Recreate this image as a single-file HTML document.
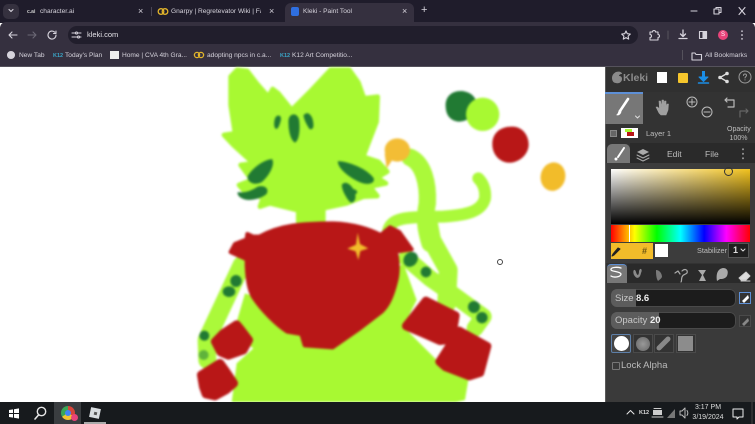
<!DOCTYPE html>
<html><head><meta charset="utf-8">
<style>
html,body{margin:0;padding:0;width:755px;height:424px;overflow:hidden;background:#fff;font-family:"Liberation Sans",sans-serif}
.a{position:absolute;white-space:nowrap}
#root{position:absolute;left:0;top:0;width:755px;height:424px;overflow:hidden;filter:blur(.35px)}
.t{color:#d6d3dc;font-size:6.600px;line-height:10px}
.p{color:#bdbdbd;font-size:8.500px;line-height:10px}
</style></head><body><div id="root">

<!-- tab strip -->
<div class="a" style="left:0;top:0;width:755px;height:23px;background:#1f1c2b"></div>
<div class="a" style="left:3px;top:4px;width:16px;height:15px;background:#35313f;border-radius:5px"></div>
<div class="a" style="left:285px;top:3px;width:129px;height:20px;background:#35303f;border-radius:6px 6px 0 0"></div>
<div class="a" style="left:151px;top:7px;width:1px;height:9px;background:#4a4655"></div>
<div class="a t" style="left:27px;top:7px;font-size:5px;font-weight:bold;color:#ccc">c.ai</div>
<div class="a t" style="left:40px;top:6.500px">character.ai</div>
<div class="a t" style="left:171px;top:6.500px;width:90px;overflow:hidden">Gnarpy | Regretevator Wiki | Fa</div>
<div class="a" style="left:291px;top:7px;width:8px;height:9px;background:#2f6fe0;border-radius:2px"></div>
<div class="a t" style="left:303px;top:6.500px">Kleki - Paint Tool</div>
<div class="a t" style="left:138px;top:6px;font-size:9px">×</div>
<div class="a t" style="left:269px;top:6px;font-size:9px">×</div>
<div class="a t" style="left:402px;top:6px;font-size:9px">×</div>
<div class="a t" style="left:421px;top:5px;font-size:11px">+</div>

<!-- toolbar + bookmarks -->
<div class="a" style="left:0;top:22px;width:755px;height:44px;background:#35303f;border-radius:6px 6px 0 0"></div>
<div class="a" style="left:0;top:66px;width:755px;height:1px;background:#55525c"></div>
<div class="a" style="left:68px;top:26px;width:570px;height:18px;background:#211e2c;border-radius:9px"></div>
<div class="a t" style="left:87px;top:30px;font-size:7.500px;color:#e4e2e8">kleki.com</div>
<div class="a t" style="left:19px;top:50.500px">New Tab</div>
<div class="a" style="left:53px;top:50.500px;font-size:5.500px;font-weight:bold;color:#3aa7c9;line-height:10px">K12</div>
<div class="a t" style="left:65px;top:50.500px">Today's Plan</div>
<div class="a" style="left:110px;top:51px;width:9px;height:8px;background:#eee"></div>
<div class="a t" style="left:122px;top:50.500px">Home | CVA 4th Gra...</div>
<div class="a t" style="left:207px;top:50.500px">adopting npcs in c.a...</div>
<div class="a" style="left:280px;top:50.500px;font-size:5.500px;font-weight:bold;color:#3aa7c9;line-height:10px">K12</div>
<div class="a t" style="left:292px;top:50.500px">K12 Art Competitio...</div>
<div class="a t" style="left:705px;top:50.500px">All Bookmarks</div>
<div class="a" style="left:682px;top:50px;width:1px;height:10px;background:#55525c"></div>
<div class="a" style="left:718px;top:30px;width:10px;height:10px;border-radius:50%;background:#e8437a;color:#fff;font-size:6px;line-height:10px;text-align:center">S</div>

<svg class="a" style="left:0;top:0" width="755" height="67" fill="none" stroke="#d6d3dc" stroke-width="1.100" stroke-linecap="round" stroke-linejoin="round">
<path d="M9 9.500l2 2 2-2"/>
<path d="M9 35h8M12 32l-3 3 3 3"/>
<path stroke="#6c6876" d="M28 35h8M33 32l3 3-3 3"/>
<path d="M56 35a4 4 0 1 1-1.200-2.800M56 31v2.500h-2.500"/>
<path d="M72 33h3M78 33h3M72 37h5M80 37h1"/><circle cx="76.500" cy="33" r="1"/><circle cx="78.500" cy="37" r="1"/>
<circle cx="161" cy="11.500" r="2.800" stroke="#e2b52b" stroke-width="1.300"/><circle cx="165" cy="11.500" r="2.800" stroke="#e2b52b" stroke-width="1.300"/>
<circle cx="197" cy="55" r="2.600" stroke="#e2b52b" stroke-width="1.300"/><circle cx="201" cy="55" r="2.600" stroke="#e2b52b" stroke-width="1.300"/>
<circle cx="11" cy="55" r="3.500" fill="#d6d3dc"/>
<path d="M691 11h6"/><rect x="714" y="9" width="5" height="5"/><path d="M716 9V7.500h5v5h-2"/><path d="M739 7.500l6 7M745 7.500l-6 7"/>
<path d="M626 31l1.300 2.700 3 .4-2.200 2 .6 3-2.700-1.500-2.700 1.500.6-3-2.200-2 3-.4z"/>
<path d="M650 32h2.500a1.500 1.500 0 0 1 3 0h2.500v2.500a1.500 1.500 0 0 1 0 3V40h-8v-2.500a1.500 1.500 0 0 0 0-3z"/>
<path stroke="#55525c" d="M668 31v8"/>
<path d="M683 30v6M680.500 34l2.500 2.500 2.500-2.500M679 38.500h8" stroke-width="1.300"/>
<rect x="699.500" y="31.500" width="7" height="7"/><rect x="703" y="31.500" width="3.500" height="7" fill="#d6d3dc"/>
<path d="M742 31v.4M742 34.800v.4M742 38.600v.4" stroke-width="1.500"/>
<path d="M692 53h3l1 1.500h5.500v5.500H692z"/>
</svg>

<!-- canvas -->
<div class="a" style="left:0;top:67px;width:605px;height:335px;background:#fff"></div>
<svg class="a" style="left:0;top:67px;filter:blur(1.100px)" width="605" height="335" viewBox="0 67 605 335">
<!-- swatches, tail -->
<g transform="translate(380,80) scale(.3333)">
<path d="M197 80C195 50 215 32 245 33 270 35 292 50 290 80 285 110 260 125 235 125 210 122 198 105 197 80Z" fill="#217a33"/>
<circle cx="308" cy="103" r="50" fill="#a8f932"/>
<path d="M337 190C338 160 360 140 395 140 425 138 447 165 446 195 445 225 415 250 385 248 355 245 336 220 337 190Z" fill="#b81717"/>
<ellipse cx="519" cy="290" rx="37" ry="43" transform="rotate(12 519 290)" fill="#f2bc2a"/>
<path d="M90 232C130 250 145 310 142 370 132 420 138 450 150 490" fill="none" stroke="#abf93a" stroke-width="52" stroke-linecap="round"/>
<path d="M25 450C35 415 70 410 190 410 260 405 305 395 315 355 318 325 305 305 295 295" fill="none" stroke="#abf93a" stroke-width="36" stroke-linecap="round"/>
<ellipse cx="52" cy="210" rx="38" ry="35" fill="#f3bd35"/>
<path d="M14 220L20 265 40 235Z" fill="#f3bd35"/>
</g>
<!-- head -->
<g transform="translate(190,65) scale(.3333)">
<path d="M122 35 142 14 172 18 200 55 235 95 248 72 265 85 305 135 365 75 422 14 478 14 505 52 522 100 563 95 560 170 535 235 520 275 565 290 592 320 562 338 588 355 540 365 562 393 520 395 470 415 400 430 400 470 325 470 325 436 240 415 210 425 220 395 175 393 147 360 185 345 152 300 190 295 130 240 102 210 135 205 122 120Z" fill="#a8f932" stroke="#a8f932" stroke-width="14" stroke-linejoin="round"/>
<g fill="#217a33" stroke="#217a33" stroke-width="5" stroke-linejoin="round">
<path d="M257 162C262 150 273 152 270 166 267 178 262 191 258 189 254 184 254 172 257 162Z"/>
<path d="M298 165C300 148 320 144 325 165 328 190 326 222 315 230 302 222 297 190 298 165Z"/>
<path d="M343 152C352 140 363 152 366 166 370 184 368 192 360 190 352 178 345 165 343 152Z"/>
<path d="M175 335C188 312 220 288 245 285 252 302 233 333 213 350 195 358 175 352 175 335Z"/>
<path d="M145 384C167 387 190 377 205 367 223 363 234 372 228 385 213 398 180 407 162 400 152 396 145 390 145 384Z"/>
<path d="M446 291C475 293 528 312 549 341 552 355 530 359 505 347 477 333 448 310 446 291Z"/>
<path d="M458 360C466 351 479 358 488 374 502 377 502 384 493 386 497 403 489 414 481 409 471 398 458 375 458 360Z"/>
</g>
</g>
<!-- body -->
<g transform="translate(190,220) scale(.3333)">
<path d="M165 220 130 340 190 385 140 430 125 548 790 548 825 540 835 480 740 420 640 320 680 240 640 130 400 300Z" fill="#a8f932"/>
<g fill="none" stroke="#abf93a" stroke-linecap="round" stroke-linejoin="round" stroke-width="54">
<path d="M155 135 50 360 52 420"/>
<path d="M650 115 720 175 770 210 880 290 855 325" stroke-width="50"/>
<path d="M712 -10 725 60 775 150 770 250" stroke-width="56"/>
</g>
<g fill="#b81717" stroke="#b81717" stroke-width="12" stroke-linejoin="round">
<path d="M208 50C270 15 340 10 430 10 490 12 540 28 572 45L600 22 628 36 665 88 618 95C625 130 625 160 618 185 608 225 596 255 575 275L510 325 428 382 344 376 334 342 292 335C260 315 215 270 190 232 174 205 170 160 170 118L122 96 135 72 170 58 172 42 190 50Z"/>
</g>
<g fill="#b81717" stroke="#b81717" stroke-width="26" stroke-linejoin="round">
<path d="M76 365 100 340 140 314 150 326 176 360 160 390 115 406 92 396Z"/>
<path d="M34 465 90 430 106 452 131 490 108 510 75 528 48 522 40 500Z"/>
<path d="M649 318 708 243 796 287 784 358 750 362 696 338Z"/>
<path d="M749 425 808 333 891 379 870 458 838 468 766 440Z"/>
</g>
<path d="M503 38 510 72 535 85 511 93 505 120 497 94 472 86 498 74Z" fill="#f2bc2a"/>
<g fill="#217a33">
<ellipse cx="138" cy="183" rx="17" ry="18"/><ellipse cx="117" cy="215" rx="19" ry="16"/>
<circle cx="43" cy="347" r="15"/><circle cx="41" cy="405" r="15" fill="#5fb33b"/>
<ellipse cx="662" cy="118" rx="20" ry="24" transform="rotate(40 662 118)"/><circle cx="708" cy="156" r="16"/>
<circle cx="852" cy="261" r="18"/><circle cx="876" cy="293" r="17"/>
</g>
</g>
</svg>
<div class="a" style="left:497px;top:259px;width:4px;height:4px;border:1px solid #444;border-radius:50%"></div>

<!-- panel -->
<div class="a" style="left:605px;top:67px;width:150px;height:335px;background:#333"></div>
<div class="a" style="left:605px;top:67px;width:150px;height:25px;background:#303030"></div>
<div class="a" style="left:605px;top:67px;width:1px;height:335px;background:#5a5a5a"></div>
<div class="a" style="left:605px;top:92px;width:38px;height:32px;background:#777;border-top:2px solid #5d8fd6;box-sizing:border-box"></div>
<div class="a" style="left:607px;top:144px;width:23px;height:19px;background:#777;border-radius:5px 5px 0 0"></div>
<div class="a" style="left:630px;top:143px;width:125px;height:20px;background:#2a2a2a"></div>
<div class="a" style="left:606px;top:163px;width:149px;height:100px;background:#3c3c3c"></div>
<div class="a" style="left:607px;top:264px;width:20px;height:19px;background:#777;border-top:1px solid #5d8fd6;border-radius:4px 4px 0 0;box-sizing:border-box"></div>
<div class="a" style="left:627px;top:264px;width:128px;height:19px;background:#2a2a2a"></div>
<div class="a" style="left:606px;top:283px;width:149px;height:119px;background:#3a3a3a"></div>

<div class="a" style="left:623px;top:71px;color:#8c8c8c;font-size:10.500px;font-weight:bold;line-height:14px">Kleki</div>
<div class="a" style="left:657px;top:72px;width:10px;height:11px;background:#fff"></div>
<div class="a" style="left:678px;top:73px;width:10px;height:10px;background:#f6c62c;border-radius:1px"></div>
<div class="a" style="left:610px;top:130px;width:5px;height:5px;background:#666;border:1px solid #888"></div>
<div class="a" style="left:621px;top:128px;width:17px;height:10px;background:#fff"></div>
<div class="a" style="left:627px;top:132px;width:7px;height:4px;background:#b81717"></div>
<div class="a" style="left:625px;top:129px;width:7px;height:3px;background:#a8f932"></div>
<div class="a p" style="left:646px;top:129px;font-size:7.500px">Layer 1</div>
<div class="a p" style="left:727px;top:125px;font-size:7px;width:23px;text-align:center;line-height:9px">Opacity<br>100%</div>
<div class="a p" style="left:667px;top:149px">Edit</div>
<div class="a p" style="left:705px;top:149px">File</div>

<!-- colour -->
<div class="a" style="left:611px;top:169px;width:139px;height:55px;background:linear-gradient(to bottom,transparent,#000),linear-gradient(to right,#fff,#f1c21f)"></div>
<div class="a" style="left:724px;top:167px;width:7px;height:7px;border:1px solid #333;border-radius:50%"></div>
<div class="a" style="left:611px;top:225px;width:139px;height:17px;background:linear-gradient(to right,#f00,#ff0 17%,#0f0 33%,#0ff 50%,#00f 67%,#f0f 83%,#f00)"></div>
<div class="a" style="left:629px;top:225px;width:1px;height:17px;background:#fff"></div>
<div class="a" style="left:611px;top:243px;width:42px;height:16px;background:#f2bc2a"></div>
<div class="a" style="left:642px;top:246px;font-size:9px;line-height:10px;color:#6b5410;font-weight:bold">#</div>
<div class="a" style="left:655px;top:244px;width:13px;height:13px;background:#fff"></div>
<div class="a p" style="left:697px;top:246px;font-size:7.300px">Stabilizer</div>
<div class="a" style="left:728px;top:243px;width:21px;height:15px;background:#1f1f1f;border:1px solid #555;box-sizing:border-box;color:#ddd;font-size:9px;line-height:13px;padding-left:4px;font-weight:bold">1</div>

<!-- sliders -->
<div class="a" style="left:611px;top:289px;width:125px;height:18px;background:#1c1c1c;border-radius:6px;box-shadow:inset 0 0 0 1px #4a4a4a"></div>
<div class="a" style="left:611px;top:289px;width:25px;height:18px;background:#5c5c5c;border-radius:6px 0 0 6px"></div>
<div class="a" style="left:615px;top:293px;color:#c8c8c8;font-size:9.500px;line-height:11px">Size</div>
<div class="a" style="left:636px;top:293px;color:#eee;font-size:9.500px;line-height:11px;font-weight:bold">8.6</div>
<div class="a" style="left:611px;top:312px;width:125px;height:17px;background:#1c1c1c;border-radius:6px;box-shadow:inset 0 0 0 1px #4a4a4a"></div>
<div class="a" style="left:611px;top:312px;width:48px;height:17px;background:#5c5c5c;border-radius:6px 0 0 6px"></div>
<div class="a" style="left:615px;top:315px;color:#c8c8c8;font-size:9.500px;line-height:11px">Opacity</div>
<div class="a" style="left:650px;top:315px;color:#eee;font-size:9.500px;line-height:11px;font-weight:bold">20</div>
<div class="a" style="left:739px;top:292px;width:12px;height:12px;background:#333;border:1px solid #5d8fd6;box-sizing:border-box"></div>
<div class="a" style="left:739px;top:315px;width:12px;height:12px;background:#333;border:1px solid #4a4a4a;box-sizing:border-box"></div>

<!-- brush shapes -->
<div class="a" style="left:611px;top:334px;width:20px;height:19px;background:#444;border:1px solid #5d7fa8;box-sizing:border-box;border-radius:2px"></div>
<div class="a" style="left:614px;top:336px;width:15px;height:15px;background:#fff;border-radius:50%"></div>
<div class="a" style="left:633px;top:334px;width:20px;height:19px;background:#333;border:1px solid #4a4a4a;box-sizing:border-box"></div>
<div class="a" style="left:636px;top:337px;width:14px;height:14px;background:radial-gradient(#999,#666);border-radius:50%"></div>
<div class="a" style="left:654px;top:334px;width:20px;height:19px;background:#333;border:1px solid #4a4a4a;box-sizing:border-box"></div>
<div class="a" style="left:676px;top:334px;width:20px;height:19px;background:#333;border:1px solid #4a4a4a;box-sizing:border-box"></div>
<div class="a" style="left:678px;top:336px;width:15px;height:15px;background:#8c8c8c"></div>
<div class="a" style="left:612px;top:362px;width:6px;height:6px;border:1px solid #777;border-radius:1px"></div>
<div class="a" style="left:621px;top:360px;color:#bbb;font-size:9.500px;line-height:11px">Lock Alpha</div>

<svg class="a" style="left:605px;top:67px" width="150" height="335" viewBox="605 67 150 335" fill="none" stroke-linecap="round" stroke-linejoin="round">
<!-- logo -->
<path d="M616 72c3-1 6 0 6 2-2 0-3 1-3 2 2 0 3 1 3 3 0 3-3 5-6 4-3 0-4-3-4-5 0-3 2-5 4-6z" fill="#8a8a8a"/>
<!-- download -->
<path d="M703.500 71v7" stroke="#1b8ee6" stroke-width="3" stroke-linecap="butt"/><path d="M699 77h9l-4.500 4.500z" fill="#1b8ee6" stroke="#1b8ee6"/><path d="M698.500 83h10" stroke="#1b8ee6" stroke-width="1.500"/>
<!-- share -->
<path d="M727 73.500l-7 4 7 4" stroke="#ddd" stroke-width="1.300"/><circle cx="727" cy="73.500" r="1.800" fill="#ddd"/><circle cx="720" cy="77.500" r="1.800" fill="#ddd"/><circle cx="727" cy="81.500" r="1.800" fill="#ddd"/>
<circle cx="745" cy="77" r="6" stroke="#999"/><path d="M743.500 75.500c0-2 3-2 3 0 0 1.200-1.500 1.200-1.500 2.500M745 79.800v.2" stroke="#999"/>
<!-- brushes -->
<path d="M628 99 620 111" stroke="#fff" stroke-width="2.600"/><path d="M619 110c2 0 3 1 2 3-1 2-3 3-5 2 2-1 2-3 3-5z" fill="#fff"/>
<path d="M635.500 116l2 2 2-2" stroke="#ddd"/>
<path d="M656 107l3 6 2 2h5l2-5 .5-6-1.500 0-1 4 0-7h-1.500l-.5 6-.5-7h-1.500l-.5 7-1-6h-1.500l.5 8-2-2z" fill="#a0a0a0" stroke="#a0a0a0" stroke-width=".6"/>
<circle cx="692" cy="102" r="5" stroke="#bbb"/><path d="M689 102h6M692 99v6" stroke="#bbb"/>
<circle cx="707" cy="112" r="5" stroke="#bbb"/><path d="M704 112h6" stroke="#bbb"/>
<path d="M725 100h9v7h-6M727 98l-2 2 2 2" stroke="#bbb" stroke-width="1.200"/>
<path d="M740 117v-6h8M746 109l2 2-2 2" stroke="#666" stroke-width="1.200"/>
<path d="M624 148l-6 9" stroke="#fff" stroke-width="2"/><circle cx="616" cy="159" r="1.500" fill="#fff"/>
<path d="M643 149l6 3-6 3-6-3z" fill="#aaa"/><path d="M637 155l6 3 6-3M637 158l6 3 6-3" stroke="#aaa"/>
<path d="M743 149v.5M743 153.500v.5M743 158v.5" stroke="#aaa" stroke-width="1.600"/>
<path d="M618 248l-5 6-1 2 2-1 6-6z" fill="#222" stroke="#222"/>
<path d="M741 249l2 2 2-2" stroke="#ddd"/>
<!-- tool row -->
<path d="M621 268c-3-1-9-1-10 1-1 3 9 2 10 5 0 3-7 4-10 2" stroke="#fff" stroke-width="1.300"/>
<path d="M634 275c-2-5 1-7 2-3 1 4 3 4 3-1 1-4 4-2 2 2-1 5-4 7-7 2z" fill="#8a8a8a"/>
<path d="M656 270c3 0 6 3 6 7-1 2-3 3-4 4-2-3-2-8-2-11z" fill="#7a7a7a"/>
<path d="M675 273l3-2 2 3M682 271c3-3 6-1 5 2-2 2-4 1-5 4-1 3 0 4-1 5" stroke="#aaa" stroke-width="1.200"/>
<path d="M698 270h8l-3 5 3 6h-7l3-6z" fill="#aaa"/>
<path d="M717 281c-1-6 0-12 6-13 4 0 6 3 4 8-2 3-5 3-7 3z" fill="#aaa"/>
<path d="M739 278l7-6 4 4-4 4h-5zM741 281h9" stroke="#ccc" fill="#ddd"/>
<!-- sliders icons -->
<path d="M742 301l6-6 1 3-5 5z" fill="#fff"/><path d="M742 324l6-6 1 3-5 5z" fill="#888"/>
<path d="M659 348l9-9" stroke="#888" stroke-width="5"/>
</svg>

<!-- taskbar -->
<div class="a" style="left:0;top:402px;width:755px;height:22px;background:#171a1d"></div>
<div class="a" style="left:54px;top:402px;width:27px;height:22px;background:#3a3d40"></div>
<div class="a" style="left:84px;top:422px;width:22px;height:2px;background:#aaa"></div>
<div class="a" style="left:61px;top:406px;width:14px;height:14px;border-radius:50%;background:conic-gradient(#d8453a 0 33%,#f4c430 33% 66%,#3aa757 66%)"></div>
<div class="a" style="left:65px;top:410px;width:6px;height:6px;border-radius:50%;background:#4285f4"></div>
<div class="a" style="left:71px;top:414px;width:7px;height:7px;border-radius:50%;background:#e8437a"></div>
<div class="a" style="left:90px;top:408px;width:10px;height:10px;background:#d8dde0;transform:rotate(12deg)"></div>
<div class="a" style="left:94px;top:412px;width:3px;height:3px;background:#555;transform:rotate(12deg)"></div>
<div class="a" style="left:693px;top:403px;color:#ddd;font-size:7px;line-height:10px;width:30px;text-align:center">3:17 PM</div>
<div class="a" style="left:689px;top:413px;color:#ddd;font-size:7px;line-height:10px;width:38px;text-align:center">3/19/2024</div>
<div class="a" style="left:639px;top:409px;color:#ddd;font-size:5.500px;font-weight:bold;line-height:8px">K12</div>
<svg class="a" style="left:0;top:402px" width="755" height="22" fill="none" stroke="#e6e6e6" stroke-linecap="round" stroke-linejoin="round">
<path d="M9 8l4-.6V11H9zM14 7.200l5-.8V11h-5zM9 12h4v3.600l-4-.6zM14 12h5v4.600l-5-.8z" fill="#fff" stroke="none"/>
<circle cx="41.500" cy="9.500" r="4.200" stroke-width="1.400"/><path d="M38.500 13 35 17" stroke-width="1.600"/>
<path d="M627 12l3.500-3.500L634 12"/>
<rect x="653" y="8" width="9" height="5" fill="#ccc" stroke="none"/><path d="M652 15h11M654 6.500h7" stroke="#ccc"/>
<path d="M667 16l8-9v9z" fill="#777" stroke="none"/>
<path d="M680 9h2l3-3v10l-3-3h-2z" stroke="#bbb"/><path d="M687 8.500c1 1.500 1 3.500 0 5" stroke="#bbb"/>
<path d="M733 7h10v8h-4l-2 2v-2h-4z" stroke="#eee"/>
<path d="M752 0v22" stroke="#444"/>
</svg>
</div></body></html>
